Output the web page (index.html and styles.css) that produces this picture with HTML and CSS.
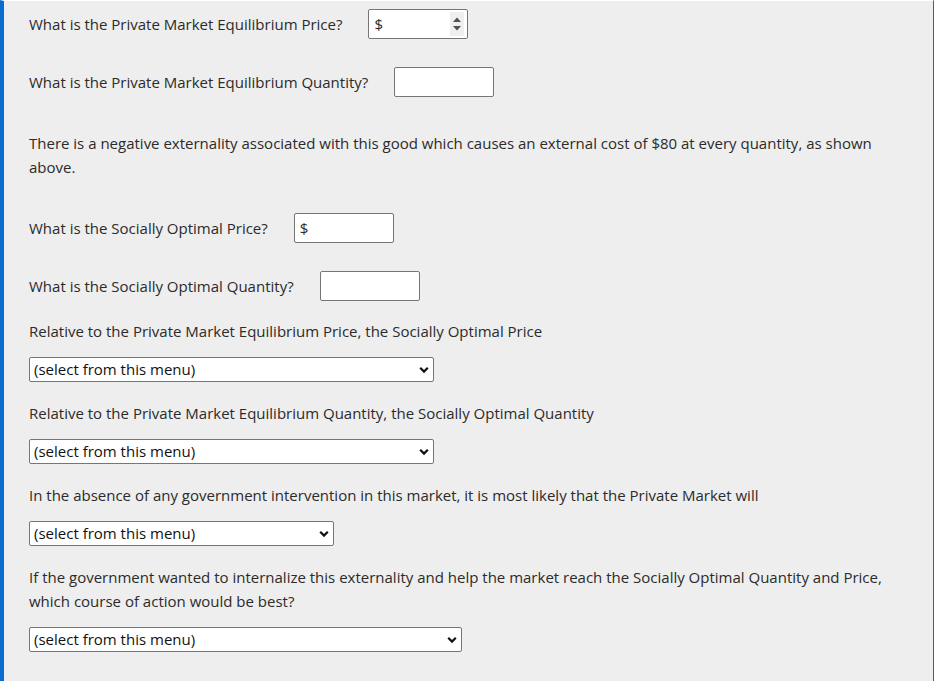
FILE: index.html
```html
<!DOCTYPE html>
<html>
<head>
<meta charset="utf-8">
<link rel="stylesheet" href="styles.css">
</head>
<body>
<div class="panel">
  <div class="row r1">
    <span class="label">What is the Private Market Equilibrium Price?</span>
    <div class="box money spin-box"><span class="cur">$</span><span class="spinner"><svg width="12" height="22" viewBox="0 0 12 22"><path d="M2 9 L6 4.5 L10 9 Z" fill="#505050"/><path d="M2 13 L6 17.5 L10 13 Z" fill="#505050"/></svg></span></div>
  </div>
  <div class="row r2">
    <span class="label">What is the Private Market Equilibrium Quantity?</span>
    <div class="box"></div>
  </div>
  <p class="para p1">There is a negative externality associated with this good which causes an external cost of $80 at every quantity, as shown above.</p>
  <div class="row r3">
    <span class="label">What is the Socially Optimal Price?</span>
    <div class="box money"><span class="cur">$</span></div>
  </div>
  <div class="row r4">
    <span class="label">What is the Socially Optimal Quantity?</span>
    <div class="box"></div>
  </div>
  <p class="para q first-q">Relative to the Private Market Equilibrium Price, the Socially Optimal Price</p>
  <div class="sel w405">(select from this menu)<svg class="chev" width="10" height="8" viewBox="0 0 10 8"><path d="M1.2 1.8 L5 5.6 L8.8 1.8" fill="none" stroke="#111" stroke-width="2.2"/></svg></div>
  <p class="para q">Relative to the Private Market Equilibrium Quantity, the Socially Optimal Quantity</p>
  <div class="sel w405">(select from this menu)<svg class="chev" width="10" height="8" viewBox="0 0 10 8"><path d="M1.2 1.8 L5 5.6 L8.8 1.8" fill="none" stroke="#111" stroke-width="2.2"/></svg></div>
  <p class="para q">In the absence of any government intervention in this market, it is most likely that the Private Market will</p>
  <div class="sel w305">(select from this menu)<svg class="chev" width="10" height="8" viewBox="0 0 10 8"><path d="M1.2 1.8 L5 5.6 L8.8 1.8" fill="none" stroke="#111" stroke-width="2.2"/></svg></div>
  <p class="para q">If the government wanted to internalize this externality and help the market reach the Socially Optimal Quantity and Price, which course of action would be best?</p>
  <div class="sel w433">(select from this menu)<svg class="chev" width="10" height="8" viewBox="0 0 10 8"><path d="M1.2 1.8 L5 5.6 L8.8 1.8" fill="none" stroke="#111" stroke-width="2.2"/></svg></div>
</div>
</body>
</html>
```

FILE: styles.css
```css
html, body {
  margin: 0;
  padding: 0;
  background: #eeeeee;
}
body {
  font-family: "Open Sans", "Noto Sans", sans-serif;
  font-size: 15px;
  color: #2b2b2b;
}
.panel {
  box-sizing: border-box;
  width: 934px;
  height: 681px;
  background: #eeeeee;
  border-left: 4px solid #0a6ccf;
  border-right: 1px solid #0a6ccf;
  border-top: 1px solid #ffffff;
  padding: 8px 25px 0 25px;
  overflow: hidden;
}
.row {
  display: flex;
  align-items: center;
  height: 30px;
}
.r2 { margin-top: 28px; }
.r3 { margin-top: 34px; }
.r4 { margin-top: 28px; }
.label { line-height: 24px; }
.box {
  box-sizing: border-box;
  width: 100px;
  height: 30px;
  background: #fff;
  border: 1px solid #767676;
  border-radius: 2px;
  margin-left: 26px;
  display: flex;
  align-items: center;
}
.cur {
  padding-left: 5px;
  line-height: 24px;
  flex: 1;
}
.spinner {
  display: flex;
  align-items: center;
  justify-content: center;
  width: 14px;
  height: 24px;
  background: #efefef;
  margin-right: 3px;
}
.para {
  margin: 0;
  line-height: 24px;
}
.p1 { margin-top: 34px; }
.q { margin-top: 19px; }
.first-q { margin-top: 18px; }
.sel {
  box-sizing: border-box;
  height: 25px;
  background: #fff;
  border: 1px solid #767676;
  border-radius: 2px;
  margin-top: 14px;
  padding-left: 4px;
  padding-right: 4px;
  line-height: 23px;
  color: #111;
  display: flex;
  align-items: center;
  justify-content: space-between;
}
.w405 { width: 405px; }
.w305 { width: 305px; }
.w433 { width: 433px; }
```
